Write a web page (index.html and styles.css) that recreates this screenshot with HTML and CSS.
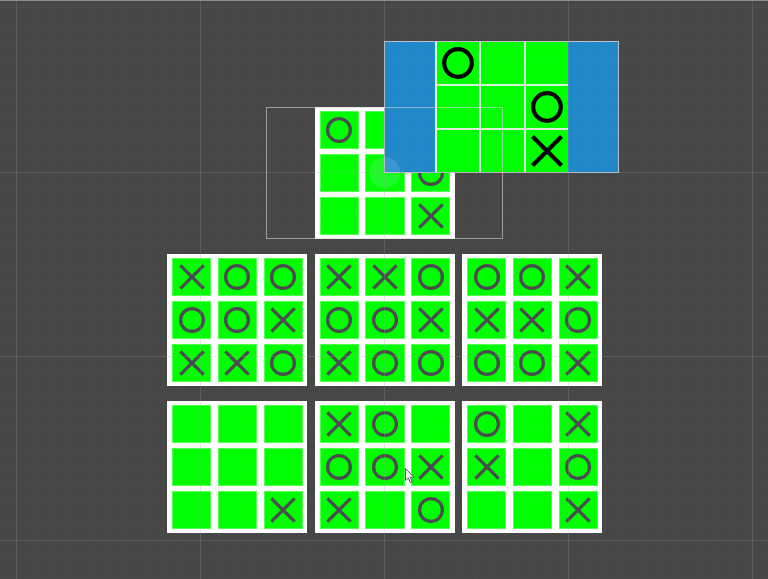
FILE: index.html
```html
<!DOCTYPE html>
<html>
<head>
<meta charset="utf-8">
<link rel="stylesheet" href="styles.css">
</head>
<body>
<div class="scene">
  <div class="boards">
    <div class="board top">
      <div class="cell"><svg class="sym" viewBox="0 0 30 30"><circle cx="15" cy="15" r="12.2"/></svg></div>
      <div class="cell"></div>
      <div class="cell"></div>
      <div class="cell"></div>
      <div class="cell"></div>
      <div class="cell"><svg class="sym" viewBox="0 0 30 30"><circle cx="15" cy="15" r="12.2"/></svg></div>
      <div class="cell"></div>
      <div class="cell"></div>
      <div class="cell"><svg class="sym" viewBox="0 0 30 30"><path d="M2.5 2.5L27.5 27.5M27.5 2.5L2.5 27.5"/></svg></div>
    </div>

    <div class="board row-start">
      <div class="cell"><svg class="sym" viewBox="0 0 30 30"><path d="M2.5 2.5L27.5 27.5M27.5 2.5L2.5 27.5"/></svg></div>
      <div class="cell"><svg class="sym" viewBox="0 0 30 30"><circle cx="15" cy="15" r="12.2"/></svg></div>
      <div class="cell"><svg class="sym" viewBox="0 0 30 30"><circle cx="15" cy="15" r="12.2"/></svg></div>
      <div class="cell"><svg class="sym" viewBox="0 0 30 30"><circle cx="15" cy="15" r="12.2"/></svg></div>
      <div class="cell"><svg class="sym" viewBox="0 0 30 30"><circle cx="15" cy="15" r="12.2"/></svg></div>
      <div class="cell"><svg class="sym" viewBox="0 0 30 30"><path d="M2.5 2.5L27.5 27.5M27.5 2.5L2.5 27.5"/></svg></div>
      <div class="cell"><svg class="sym" viewBox="0 0 30 30"><path d="M2.5 2.5L27.5 27.5M27.5 2.5L2.5 27.5"/></svg></div>
      <div class="cell"><svg class="sym" viewBox="0 0 30 30"><path d="M2.5 2.5L27.5 27.5M27.5 2.5L2.5 27.5"/></svg></div>
      <div class="cell"><svg class="sym" viewBox="0 0 30 30"><circle cx="15" cy="15" r="12.2"/></svg></div>
    </div>

    <div class="board">
      <div class="cell"><svg class="sym" viewBox="0 0 30 30"><path d="M2.5 2.5L27.5 27.5M27.5 2.5L2.5 27.5"/></svg></div>
      <div class="cell"><svg class="sym" viewBox="0 0 30 30"><path d="M2.5 2.5L27.5 27.5M27.5 2.5L2.5 27.5"/></svg></div>
      <div class="cell"><svg class="sym" viewBox="0 0 30 30"><circle cx="15" cy="15" r="12.2"/></svg></div>
      <div class="cell"><svg class="sym" viewBox="0 0 30 30"><circle cx="15" cy="15" r="12.2"/></svg></div>
      <div class="cell"><svg class="sym" viewBox="0 0 30 30"><circle cx="15" cy="15" r="12.2"/></svg></div>
      <div class="cell"><svg class="sym" viewBox="0 0 30 30"><path d="M2.5 2.5L27.5 27.5M27.5 2.5L2.5 27.5"/></svg></div>
      <div class="cell"><svg class="sym" viewBox="0 0 30 30"><path d="M2.5 2.5L27.5 27.5M27.5 2.5L2.5 27.5"/></svg></div>
      <div class="cell"><svg class="sym" viewBox="0 0 30 30"><circle cx="15" cy="15" r="12.2"/></svg></div>
      <div class="cell"><svg class="sym" viewBox="0 0 30 30"><circle cx="15" cy="15" r="12.2"/></svg></div>
    </div>

    <div class="board">
      <div class="cell"><svg class="sym" viewBox="0 0 30 30"><circle cx="15" cy="15" r="12.2"/></svg></div>
      <div class="cell"><svg class="sym" viewBox="0 0 30 30"><circle cx="15" cy="15" r="12.2"/></svg></div>
      <div class="cell"><svg class="sym" viewBox="0 0 30 30"><path d="M2.5 2.5L27.5 27.5M27.5 2.5L2.5 27.5"/></svg></div>
      <div class="cell"><svg class="sym" viewBox="0 0 30 30"><path d="M2.5 2.5L27.5 27.5M27.5 2.5L2.5 27.5"/></svg></div>
      <div class="cell"><svg class="sym" viewBox="0 0 30 30"><path d="M2.5 2.5L27.5 27.5M27.5 2.5L2.5 27.5"/></svg></div>
      <div class="cell"><svg class="sym" viewBox="0 0 30 30"><circle cx="15" cy="15" r="12.2"/></svg></div>
      <div class="cell"><svg class="sym" viewBox="0 0 30 30"><circle cx="15" cy="15" r="12.2"/></svg></div>
      <div class="cell"><svg class="sym" viewBox="0 0 30 30"><circle cx="15" cy="15" r="12.2"/></svg></div>
      <div class="cell"><svg class="sym" viewBox="0 0 30 30"><path d="M2.5 2.5L27.5 27.5M27.5 2.5L2.5 27.5"/></svg></div>
    </div>

    <div class="board">
      <div class="cell"></div>
      <div class="cell"></div>
      <div class="cell"></div>
      <div class="cell"></div>
      <div class="cell"></div>
      <div class="cell"></div>
      <div class="cell"></div>
      <div class="cell"></div>
      <div class="cell"><svg class="sym" viewBox="0 0 30 30"><path d="M2.5 2.5L27.5 27.5M27.5 2.5L2.5 27.5"/></svg></div>
    </div>

    <div class="board">
      <div class="cell"><svg class="sym" viewBox="0 0 30 30"><path d="M2.5 2.5L27.5 27.5M27.5 2.5L2.5 27.5"/></svg></div>
      <div class="cell"><svg class="sym" viewBox="0 0 30 30"><circle cx="15" cy="15" r="12.2"/></svg></div>
      <div class="cell"></div>
      <div class="cell"><svg class="sym" viewBox="0 0 30 30"><circle cx="15" cy="15" r="12.2"/></svg></div>
      <div class="cell"><svg class="sym" viewBox="0 0 30 30"><circle cx="15" cy="15" r="12.2"/></svg></div>
      <div class="cell"><svg class="sym" viewBox="0 0 30 30"><path d="M2.5 2.5L27.5 27.5M27.5 2.5L2.5 27.5"/></svg></div>
      <div class="cell"><svg class="sym" viewBox="0 0 30 30"><path d="M2.5 2.5L27.5 27.5M27.5 2.5L2.5 27.5"/></svg></div>
      <div class="cell"></div>
      <div class="cell"><svg class="sym" viewBox="0 0 30 30"><circle cx="15" cy="15" r="12.2"/></svg></div>
    </div>

    <div class="board">
      <div class="cell"><svg class="sym" viewBox="0 0 30 30"><circle cx="15" cy="15" r="12.2"/></svg></div>
      <div class="cell"></div>
      <div class="cell"><svg class="sym" viewBox="0 0 30 30"><path d="M2.5 2.5L27.5 27.5M27.5 2.5L2.5 27.5"/></svg></div>
      <div class="cell"><svg class="sym" viewBox="0 0 30 30"><path d="M2.5 2.5L27.5 27.5M27.5 2.5L2.5 27.5"/></svg></div>
      <div class="cell"></div>
      <div class="cell"><svg class="sym" viewBox="0 0 30 30"><circle cx="15" cy="15" r="12.2"/></svg></div>
      <div class="cell"></div>
      <div class="cell"></div>
      <div class="cell"><svg class="sym" viewBox="0 0 30 30"><path d="M2.5 2.5L27.5 27.5M27.5 2.5L2.5 27.5"/></svg></div>
    </div>
  </div>

  <div class="panel">
    <div class="panel-side"></div>
    <div class="panel-board">
      <div class="pcell"><svg class="psym" viewBox="0 0 34 34"><circle cx="17" cy="17" r="13.8"/></svg></div>
      <div class="pcell"></div>
      <div class="pcell"></div>
      <div class="pcell"></div>
      <div class="pcell"></div>
      <div class="pcell"><svg class="psym" viewBox="0 0 34 34"><circle cx="17" cy="17" r="13.8"/></svg></div>
      <div class="pcell"></div>
      <div class="pcell"></div>
      <div class="pcell"><svg class="psym" viewBox="0 0 34 34"><path d="M2.5 2.5L31.5 31.5M31.5 2.5L2.5 31.5"/></svg></div>
    </div>
    <div class="panel-side"></div>
  </div>

  <div class="grid-overlay"></div>
  <div class="selection"></div>
  <div class="pivot"></div>
  <svg class="cursor" viewBox="0 0 10 16" width="10" height="16"><path d="M0.5 0.5L0.5 12.5L3.3 9.9L5.3 14.6L7.2 13.8L5.3 9.3L9 9.3Z"/></svg>
</div>
</body>
</html>
```

FILE: styles.css
```css
html, body {
  margin: 0;
  padding: 0;
  background: #474747;
}

.scene {
  position: relative;
  width: 768px;
  height: 579px;
  overflow: hidden;
  box-sizing: border-box;
  border-top: 1px solid #8d8d8d;
  background: #474747;
  font-family: "Liberation Sans", Arial, sans-serif;
}

.boards {
  display: grid;
  grid-template-columns: repeat(3, 140px);
  grid-auto-rows: 132px;
  column-gap: 7.5px;
  row-gap: 15px;
  padding: 106px 0 0 167px;
}

.board {
  background: #ffffff;
  display: grid;
  grid-template-columns: repeat(3, 1fr);
  grid-template-rows: repeat(3, 1fr);
  column-gap: 6.5px;
  row-gap: 5px;
  padding: 4px 4px 4px 5px;
  box-sizing: border-box;
}

.board.top {
  grid-column: 2;
}

.board.row-start {
  grid-column-start: 1;
}

.cell {
  background: #00ff00;
  box-shadow: inset 0 0 0 1px rgba(140, 255, 140, 0.6);
  display: flex;
  align-items: center;
  justify-content: center;
}

.sym {
  width: 28px;
  height: 28px;
  fill: none;
  stroke: #4c4950;
  stroke-width: 3.5;
}

.panel {
  position: absolute;
  left: 384px;
  top: 40px;
  width: 235px;
  height: 132px;
  box-sizing: border-box;
  border: 1px solid #b9c0c6;
  display: flex;
  background: #2188c9;
}

.panel-side {
  flex: 1;
  background: #2188c9;
}

.panel-board {
  width: 133px;
  background: #d9f2d9;
  display: grid;
  grid-template-columns: repeat(3, 1fr);
  grid-template-rows: repeat(3, 1fr);
  gap: 2px;
  padding: 0 0 0 1.5px;
  box-sizing: border-box;
}

.pcell {
  background: #00ff00;
  display: flex;
  align-items: center;
  justify-content: center;
}

.psym {
  width: 34px;
  height: 34px;
  fill: none;
  stroke: #000000;
  stroke-width: 4.2;
}

.grid-overlay {
  position: absolute;
  inset: 0;
  pointer-events: none;
  background-image:
    linear-gradient(to right, rgba(165, 165, 165, 0.22) 1px, transparent 1px),
    linear-gradient(to bottom, rgba(165, 165, 165, 0.22) 1px, transparent 1px),
    linear-gradient(to right, rgba(165, 165, 165, 0.035) 1px, transparent 1px),
    linear-gradient(to bottom, rgba(165, 165, 165, 0.035) 1px, transparent 1px);
  background-size: 184px 100%, 100% 184px, 18.4px 100%, 100% 18.4px;
  background-position: 16px 0, 0 171px, 16px 0, 0 171px;
}

.selection {
  position: absolute;
  left: 266px;
  top: 106px;
  width: 237px;
  height: 132px;
  box-sizing: border-box;
  border: 1px solid rgba(215, 215, 215, 0.6);
  pointer-events: none;
}

.pivot {
  position: absolute;
  left: 369px;
  top: 156px;
  width: 31px;
  height: 31px;
  border-radius: 50%;
  background: rgba(190, 215, 255, 0.16);
  pointer-events: none;
}

.cursor {
  position: absolute;
  left: 405px;
  top: 467px;
  fill: #f4f4f4;
  stroke: #5a5a5a;
  stroke-width: 1;
}
```
